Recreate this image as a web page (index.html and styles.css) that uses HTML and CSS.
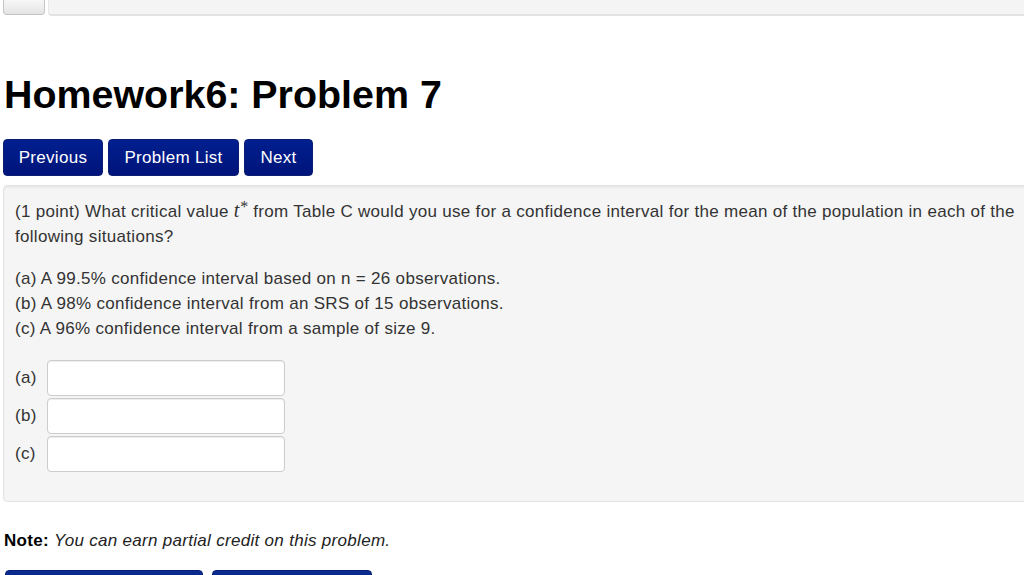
FILE: index.html
```html
<!DOCTYPE html>
<html>
<head>
<meta charset="utf-8">
<link rel="stylesheet" href="styles.css">
</head>
<body>
<div class="page">
  <div class="topstrip">
    <div class="topbtn"></div>
    <div class="topbar"></div>
  </div>
  <h1 class="title">Homework6: Problem 7</h1>
  <div class="nav">
    <a class="btn btn-prev">Previous</a>
    <a class="btn btn-list">Problem List</a>
    <a class="btn btn-next">Next</a>
  </div>
  <div class="problem">
    <p class="intro">(1 point) What critical value <span class="math"><i>t</i><sup>*</sup></span> from Table C would you use for a confidence interval for the mean of the population in each of the following situations?</p>
    <p class="items">(a) A 99.5% confidence interval based on n = 26 observations.<br>(b) A 98% confidence interval from an SRS of 15 observations.<br>(c) A 96% confidence interval from a sample of size 9.</p>
    <div class="answers">
      <div class="ans"><span class="lbl">(a)</span><input class="field" type="text"></div>
      <div class="ans"><span class="lbl">(b)</span><input class="field" type="text"></div>
      <div class="ans"><span class="lbl">(c)</span><input class="field" type="text"></div>
    </div>
  </div>
  <p class="note"><b>Note:</b> <i>You can earn partial credit on this problem.</i></p>
  <div class="bottom">
    <div class="bbtn bbtn-1"></div>
    <div class="bbtn bbtn-2"></div>
  </div>
</div>
</body>
</html>
```
FILE: styles.css
```css
html, body {
  margin: 0;
  padding: 0;
  background: #fff;
  overflow: hidden;
}
body {
  font-family: "Liberation Sans", Arial, sans-serif;
  color: #333;
  font-size: 17px;
  letter-spacing: 0.3px;
}
.page {
  width: 1100px;
  height: 575px;
  overflow: hidden;
}
.topstrip {
  display: flex;
  height: 16px;
}
.topbtn {
  margin-left: 3px;
  width: 40px;
  height: 14px;
  border: 1px solid #c4c4c4;
  border-top: none;
  border-radius: 0 0 4px 4px;
  background: linear-gradient(#f7f7f7, #e4e4e4);
}
.topbar {
  margin-left: 3px;
  flex: 1;
  height: 14px;
  background: #f4f4f4;
  border-bottom: 2px solid #e3e3e3;
  border-left: 1px solid #e8e8e8;
  border-radius: 0 0 0 4px;
}
.title {
  margin: 56px 0 0 4px;
  font-size: 39.4px;
  line-height: 44px;
  font-weight: bold;
  color: #000;
  letter-spacing: 0;
}
.nav {
  display: flex;
  gap: 5px;
  margin: 23px 0 0 3px;
}
.btn {
  display: block;
  height: 37px;
  box-sizing: border-box;
  line-height: 35px;
  color: #fff;
  font-size: 17px;
  text-align: center;
  background: linear-gradient(#001f8f, #00147a);
  border: 1px solid #0a1f73;
  border-radius: 4px;
}
.btn-prev { width: 100px; }
.btn-list { width: 131px; }
.btn-next { width: 69px; }
.problem {
  margin: 9px 0 0 3px;
  width: 1050px;
  height: 317px;
  box-sizing: border-box;
  background: #f5f5f5;
  border: 1px solid #e3e3e3;
  border-radius: 4px;
  box-shadow: inset 0 2px 2px rgba(0,0,0,0.05);
  padding: 13px 12px 0 11px;
}
.problem p {
  margin: 0;
  line-height: 25px;
}
.math {
  font-family: "Liberation Serif", "Times New Roman", serif;
  font-size: 20px;
  letter-spacing: 0;
  line-height: 0;
}
.math sup {
  font-size: 16px;
  vertical-align: 5px;
  line-height: 0;
  margin-left: 1px;
}
.intro { margin-bottom: 17px !important; }
.answers {
  margin-top: 19px;
  display: flex;
  flex-direction: column;
  gap: 2px;
}
.ans {
  display: flex;
  align-items: center;
  height: 36px;
}
.lbl {
  width: 32px;
}
.field {
  width: 238px;
  height: 36px;
  box-sizing: border-box;
  background: #fff;
  border: 1px solid #ccc;
  border-radius: 4px;
  box-shadow: inset 0 1px 1px rgba(0,0,0,0.075);
  margin: 0;
  padding: 0 6px;
}
.note {
  margin: 29px 0 0 4px;
  line-height: 20px;
  color: #000;
}
.note i { color: #222; }
.bottom {
  display: flex;
  gap: 9px;
  margin: 19px 0 0 5px;
}
.bbtn {
  height: 30px;
  box-sizing: border-box;
  background: linear-gradient(#0a2d8f, #00147a);
  border: 1px solid #0a1f73;
  border-radius: 4px;
}
.bbtn-1 { width: 198px; }
.bbtn-2 { width: 160px; }
```
